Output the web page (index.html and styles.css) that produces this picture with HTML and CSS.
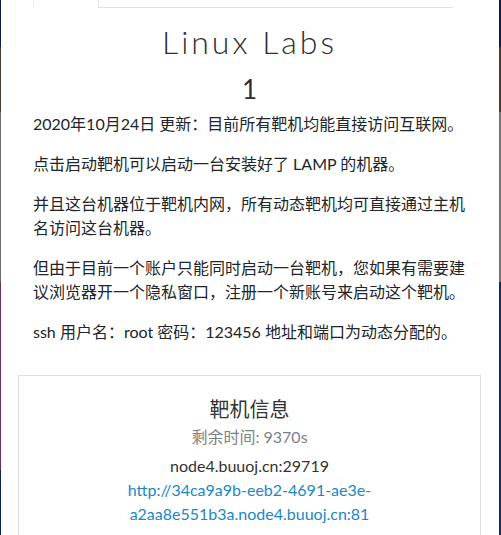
FILE: index.html
```html
<!DOCTYPE html>
<html lang="zh">
<head>
<meta charset="utf-8">
<title>Linux Labs</title>
<link rel="stylesheet" href="styles.css">
</head>
<body>
<div class="modal">
  <div class="tabs">
    <div class="tab-active"></div>
    <div class="tab-rest"></div>
  </div>
  <h1 class="title">Linux Labs</h1>
  <h2 class="value">1</h2>
  <div class="desc">
    <p>2020年10月24日 更新：目前所有靶机均能直接访问互联网。</p>
    <p>点击启动靶机可以启动一台安装好了 LAMP 的机器。</p>
    <p>并且这台机器位于靶机内网，所有动态靶机均可直接通过主机名访问这台机器。</p>
    <p>但由于目前一个账户只能同时启动一台靶机，您如果有需要建议浏览器开一个隐私窗口，注册一个新账号来启动这个靶机。</p>
    <p>ssh 用户名：root 密码：123456 地址和端口为动态分配的。</p>
  </div>
  <div class="card">
    <h5 class="card-title">靶机信息</h5>
    <p class="remain">剩余时间: 9370s</p>
    <div class="access">
      <div>node4.buuoj.cn:29719</div>
      <a class="link" href="#">http://34ca9a9b-eeb2-4691-ae3e-a2aa8e551b3a.node4.buuoj.cn:81</a>
    </div>
  </div>
</div>
</body>
</html>
```
FILE: styles.css
```css
html, body {
  margin: 0;
  padding: 0;
  height: 100%;
  overflow: hidden;
}
body {
  font-family: "Lato", "Noto Sans CJK SC", sans-serif;
  color: #212529;
  background:
    linear-gradient(to bottom, #0b1e4c 0, #0b1e4c 47px, #4a3b33 47px, #4a3b33 112px, #6e6e6e 112px, #6e6e6e 282px, #6a3550 282px, #6a3550 470px, #0e2256 470px) left top / 1px 100% no-repeat,
    linear-gradient(to bottom, #0b1e4c 0, #0b1e4c 47px, #4a3b33 47px, #4a3b33 112px, #777 112px, #777 282px, #14275e 282px) right top / 2px 100% no-repeat,
    #0e2256;
}
.modal {
  margin: 0 2px 0 1px;
  height: 100%;
  background: #fff;
  padding: 0 18px 0 17px;
}
.tabs {
  display: flex;
  height: 8px;
  margin: 0 28px 0 15px;
}
.tab-active {
  width: 64px;
  border-left: 1px solid #eceef0;
  border-right: 1px solid #dee2e6;
}
.tab-rest {
  flex: 1;
  border-bottom: 1px solid #dee2e6;
}
.title {
  margin: 15px 0 0;
  font-size: 32px;
  font-weight: 300;
  line-height: 1.2;
  letter-spacing: 3px;
  text-align: center;
  color: #2b2f33;
}
.value {
  margin: 13px 0 0;
  font-size: 26px;
  font-weight: 400;
  line-height: 1.2;
  text-align: center;
  color: #2b2f33;
}
.desc {
  padding: 0 15px;
  margin-top: 6px;
}
.desc p {
  margin: 0 0 16px;
  font-size: 16px;
  line-height: 24px;
}
.card {
  margin-top: 31px;
  border: 1px solid #dfdfdf;
  border-bottom: none;
  padding: 21px 20px 20px;
  text-align: center;
}
.card-title {
  margin: 0 0 4px;
  font-size: 20px;
  font-weight: 400;
  line-height: 24px;
  color: #333;
}
.remain {
  margin: 0 0 5px;
  font-size: 16px;
  line-height: 24px;
  color: #7b8287;
}
.access {
  font-size: 16px;
  line-height: 24px;
  color: #333;
}
.link {
  color: #1b87c5;
  text-decoration: none;
}
```
